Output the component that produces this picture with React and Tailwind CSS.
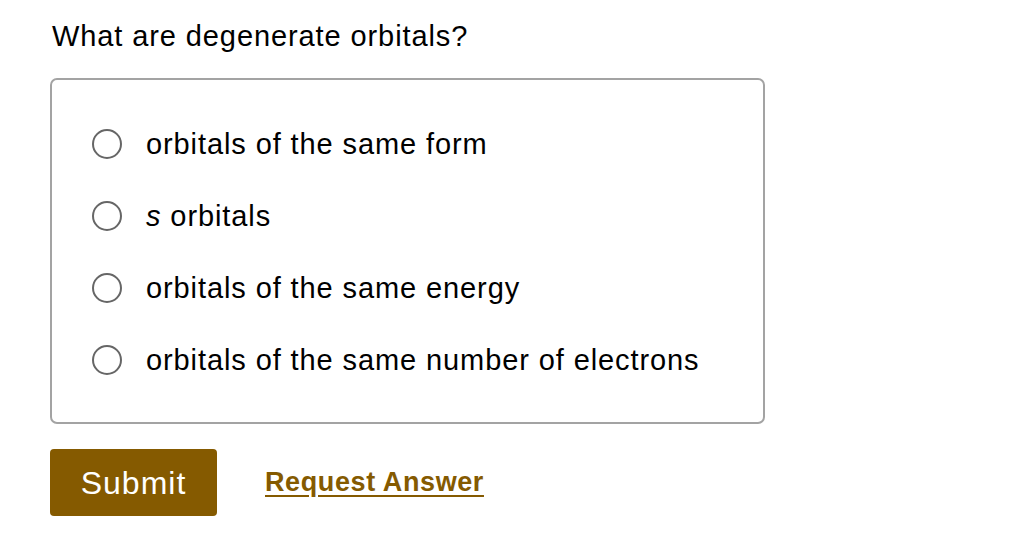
const options = [
  { id: "a", label: <>orbitals of the same form</> },
  {
    id: "b",
    label: (
      <>
        <i>s</i> orbitals
      </>
    ),
  },
  { id: "c", label: <>orbitals of the same energy</> },
  { id: "d", label: <>orbitals of the same number of electrons</> },
];

const App = () => {
  return (
    <div className="w-[1024px] h-[538px] bg-white font-['Liberation_Sans',Arial,sans-serif] text-black pl-[50px] pt-[18px]">
      <h1 className="text-[29px] leading-[36px] tracking-[0.9px] pl-[2px]">
        What are degenerate orbitals?
      </h1>
      <div className="mt-[24px] w-[715px] h-[346px] border-2 border-[#a3a3a3] rounded-[7px] pt-[46px] pl-[40px]">
        <div className="flex flex-col gap-[36px]">
          {options.map((o) => (
            <label key={o.id} className="flex items-center h-[36px]">
              <span className="w-[30px] h-[30px] rounded-full border-2 border-[#666] shrink-0"></span>
              <span className="ml-[24px] text-[29px] leading-[36px] tracking-[0.9px]">
                {o.label}
              </span>
            </label>
          ))}
        </div>
      </div>
      <div className="flex items-center mt-[25px]">
        <button
          type="button"
          className="w-[167px] h-[67px] bg-[#855a00] text-white text-[32px] tracking-[1px] rounded-[4px]"
        >
          Submit
        </button>
        <a
          href="#"
          className="ml-[48px] text-[27px] font-bold tracking-[0.6px] text-[#855a00] underline underline-offset-[4px]"
        >
          Request Answer
        </a>
      </div>
    </div>
  );
};

export default App;
